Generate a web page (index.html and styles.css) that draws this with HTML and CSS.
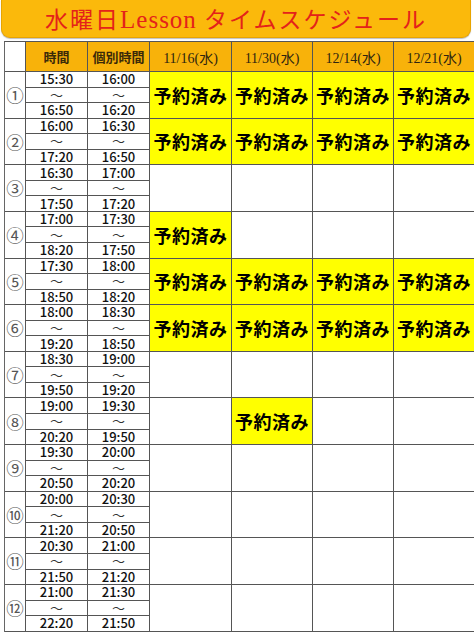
FILE: index.html
```html
<!DOCTYPE html>
<html lang="ja">
<head>
<meta charset="utf-8">
<link rel="stylesheet" href="styles.css">
</head>
<body>
<div class="page">
  <div class="title">水曜日<span class="latin">Lesson</span>&nbsp;タイムスケジュール</div>
  <div class="grid" id="grid">
    <div class="cell blank"></div>
    <div class="cell head">時間</div>
    <div class="cell head">個別時間</div>
    <div class="cell head date">11/16(水)</div>
    <div class="cell head date">11/30(水)</div>
    <div class="cell head date">12/14(水)</div>
    <div class="cell head date">12/21(水)</div>
  </div>
</div>
<script src="app.js"></script>
</body>
</html>
```
FILE: app.js
```js
var groups = [
  ["①","15:30","16:50","16:00","16:20",[1,1,1,1]],
  ["②","16:00","17:20","16:30","16:50",[1,1,1,1]],
  ["③","16:30","17:50","17:00","17:20",[0,0,0,0]],
  ["④","17:00","18:20","17:30","17:50",[1,0,0,0]],
  ["⑤","17:30","18:50","18:00","18:20",[1,1,1,1]],
  ["⑥","18:00","19:20","18:30","18:50",[1,1,1,1]],
  ["⑦","18:30","19:50","19:00","19:20",[0,0,0,0]],
  ["⑧","19:00","20:20","19:30","19:50",[0,1,0,0]],
  ["⑨","19:30","20:50","20:00","20:20",[0,0,0,0]],
  ["⑩","20:00","21:20","20:30","20:50",[0,0,0,0]],
  ["⑪","20:30","21:50","21:00","21:20",[0,0,0,0]],
  ["⑫","21:00","22:20","21:30","21:50",[0,0,0,0]]
];
var grid = document.getElementById("grid");
function add(cls, text) {
  var d = document.createElement("div");
  d.className = "cell " + cls;
  if (text) {
    var s = document.createElement("span");
    s.textContent = text;
    d.appendChild(s);
  }
  grid.appendChild(d);
}
groups.forEach(function (g) {
  add("num", g[0]);
  add("time", g[1]);
  add("time", g[3]);
  g[5].forEach(function (b) { add(b ? "slot booked" : "slot", b ? "予約済み" : ""); });
  add("time wave", "〜");
  add("time wave", "〜");
  add("time", g[2]);
  add("time", g[4]);
});
```
FILE: styles.css
```css
html, body {
  margin: 0;
  padding: 0;
  background: #ffffff;
}
body {
  width: 474px;
  height: 632px;
  overflow: hidden;
  font-family: "Noto Sans CJK JP", sans-serif;
}
.page {
  display: flex;
  flex-direction: column;
}
.title {
  margin: 0 3px 0 1px;
  height: 38px;
  box-sizing: border-box;
  background: #fbb90b;
  border: 1px solid #e8a400;
  border-top: none;
  border-radius: 0 0 9px 9px;
  color: #e4221a;
  font-family: "Noto Sans CJK JP", sans-serif;
  font-size: 23px;
  line-height: 36px;
  text-align: center;
  letter-spacing: 2px;
  box-shadow: 0 1px 1px rgba(0,0,0,0.25);
}
.title .latin {
  font-family: "Liberation Serif", serif;
  font-size: 25px;
  letter-spacing: 1px;
}
.grid {
  margin: 3px 0 0 4px;
  display: grid;
  grid-template-columns: 21px 62px 62px 82px 81px 81px 81px;
  grid-template-rows: 30px repeat(36, 15.556px);
  border-top: 1px solid #555;
  border-left: 1px solid #666;
  box-sizing: border-box;
}
.cell {
  box-sizing: border-box;
  border-right: 1px solid #555;
  border-bottom: 1px solid #555;
  display: flex;
  align-items: center;
  justify-content: center;
  white-space: nowrap;
  min-height: 0;
}
.blank {
  background: #fff;
}
.head {
  background: #f8b20a;
  color: #3b2a08;
  font-size: 13px;
  font-weight: 700;
}
.head.date {
  font-family: "Liberation Serif", "Noto Sans CJK JP", serif;
  font-weight: 400;
  font-size: 14px;
  color: #2e2410;
}
.num {
  grid-row: span 3;
  color: #555;
  font-family: "Noto Sans CJK JP", sans-serif;
  font-size: 17.5px;
  line-height: 1;
}
.time {
  font-size: 13px;
  font-weight: 500;
  color: #111;
  line-height: 12px;
}
.time span {
  display: block;
  height: 12px;
  line-height: 12px;
}
.time.wave {
  font-weight: 400;
  color: #333;
}
.slot {
  grid-row: span 3;
  background: #fff;
}
.slot.booked {
  background: #ffff00;
  color: #000;
  font-size: 18px;
  font-weight: 700;
  letter-spacing: 0.5px;
}
```
